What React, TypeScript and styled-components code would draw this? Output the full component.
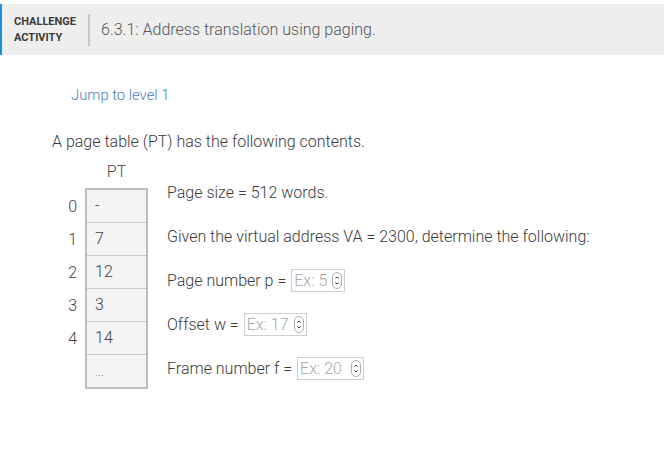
import React from 'react'
import styled, { createGlobalStyle } from 'styled-components'

const GlobalStyle = createGlobalStyle`
  body {
    margin: 0;
    background: #ffffff;
    font-family: Roboto, "Liberation Sans", sans-serif;
    font-weight: 300;
    color: #333333;
  }
`

const Header = styled.div`
  display: flex;
  align-items: center;
  margin-top: 4px;
  height: 51px;
  padding-left: 12px;
  background-color: #eeeeee;
  border-left: 2px solid #1a8ee0;
`
const HeaderLabel = styled.div`
  font-size: 11px;
  font-weight: 700;
  line-height: 16px;
  color: #3a3a3a;
  text-transform: uppercase;
`
const HeaderDivider = styled.div`
  width: 2px;
  height: 32px;
  margin: 0 11px 0 12px;
  background-color: #c8c8c8;
`
const HeaderTitle = styled.div`
  font-size: 16px;
  color: #555555;
`

const Content = styled.div`
  padding: 31px 0 0 52px;
`
const JumpLink = styled.a`
  display: block;
  margin-left: 19px;
  font-size: 14.8px;
  line-height: 18px;
  color: #4a80b8;
  text-decoration: none;
  cursor: pointer;
`
const Prompt = styled.p`
  margin: 28px 0 0;
  font-size: 16px;
  line-height: 20px;
  color: #3a3a3a;
`

const Body = styled.div`
  display: flex;
  align-items: flex-start;
  margin-top: 10px;
`
const TableBlock = styled.div`
  display: flex;
  flex-direction: column;
`
const TableCaption = styled.div`
  margin-left: 33px;
  width: 63px;
  text-align: center;
  font-size: 16px;
  line-height: 20px;
  color: #444444;
`
const TableRows = styled.div`
  display: flex;
  margin-top: 6px;
`
const Indices = styled.div`
  display: flex;
  flex-direction: column;
  width: 25px;
  padding: 2px 8px 0 0;
`
const Index = styled.div`
  height: 33px;
  line-height: 34px;
  text-align: right;
  font-size: 16px;
  color: #444444;
`
const Table = styled.div`
  display: flex;
  flex-direction: column;
  width: 59px;
  border: 2px solid #bdbdbd;
  background-color: #f4f4f4;
`
const Cell = styled.div<{ $last?: boolean }>`
  height: 32px;
  padding-left: 8px;
  line-height: 32px;
  font-size: 16px;
  color: #444444;
  border-bottom: ${p => (p.$last ? 'none' : '1px solid #c8c8c8')};
`
const Dots = styled.span`
  font-size: 11px;
  color: #666666;
  letter-spacing: 0.5px;
`

const Questions = styled.div`
  display: flex;
  flex-direction: column;
  gap: 20px;
  margin: 18px 0 0 19px;
`
const Line = styled.div`
  display: flex;
  align-items: center;
  height: 24px;
  font-size: 16px;
  color: #3a3a3a;
`
const InputBox = styled.label<{ $width: number }>`
  display: flex;
  align-items: center;
  box-sizing: border-box;
  width: ${p => p.$width}px;
  height: 23px;
  margin-left: 5px;
  padding: 0 2px 0 2px;
  border: 1px solid #c9d3d6;
  background: #ffffff;
`
const Field = styled.input`
  flex: 1;
  min-width: 0;
  padding: 0;
  border: none;
  outline: none;
  background: transparent;
  font-family: Roboto, "Liberation Sans", sans-serif;
  font-weight: 300;
  font-size: 16px;
  color: #333333;
  &::placeholder {
    color: #a8a8a8;
  }
`

function Spinner() {
  return (
    <svg width="10" height="17" viewBox="0 0 10 17" fill="none">
      <rect x="0.5" y="0.5" width="9" height="16" rx="4.5" stroke="#b0b0b0" />
      <path d="M3.3 6.6 L5 5 L6.7 6.6" stroke="#444" strokeWidth="1" />
      <path d="M3.3 10.4 L5 12 L6.7 10.4" stroke="#444" strokeWidth="1" />
    </svg>
  )
}

function NumberInput({ placeholder, width }: { placeholder: string, width: number }) {
  return (
    <InputBox $width={width}>
      <Field type="text" placeholder={placeholder} />
      <Spinner />
    </InputBox>
  )
}

const rows = ['-', '7', '12', '3', '14']

function App() {
  return (
    <>
      <GlobalStyle />
      <Header>
        <HeaderLabel>
          Challenge
          <br />
          Activity
        </HeaderLabel>
        <HeaderDivider />
        <HeaderTitle>6.3.1: Address translation using paging.</HeaderTitle>
      </Header>

      <Content>
        <JumpLink>Jump to level 1</JumpLink>
        <Prompt>A page table (PT) has the following contents.</Prompt>

        <Body>
          <TableBlock>
            <TableCaption>PT</TableCaption>
            <TableRows>
              <Indices>
                {rows.map((_, i) => (
                  <Index key={i}>{i}</Index>
                ))}
              </Indices>
              <Table>
                {rows.map((value, i) => (
                  <Cell key={i}>{value}</Cell>
                ))}
                <Cell $last>
                  <Dots>...</Dots>
                </Cell>
              </Table>
            </TableRows>
          </TableBlock>

          <Questions>
            <Line>Page size = 512 words.</Line>
            <Line>Given the virtual address VA = 2300, determine the following:</Line>
            <Line>
              Page number p =
              <NumberInput placeholder="Ex: 5" width={54} />
            </Line>
            <Line>
              Offset w =
              <NumberInput placeholder="Ex: 17" width={63} />
            </Line>
            <Line>
              Frame number f =
              <NumberInput placeholder="Ex: 20" width={67} />
            </Line>
          </Questions>
        </Body>
      </Content>
    </>
  )
}

export default App
